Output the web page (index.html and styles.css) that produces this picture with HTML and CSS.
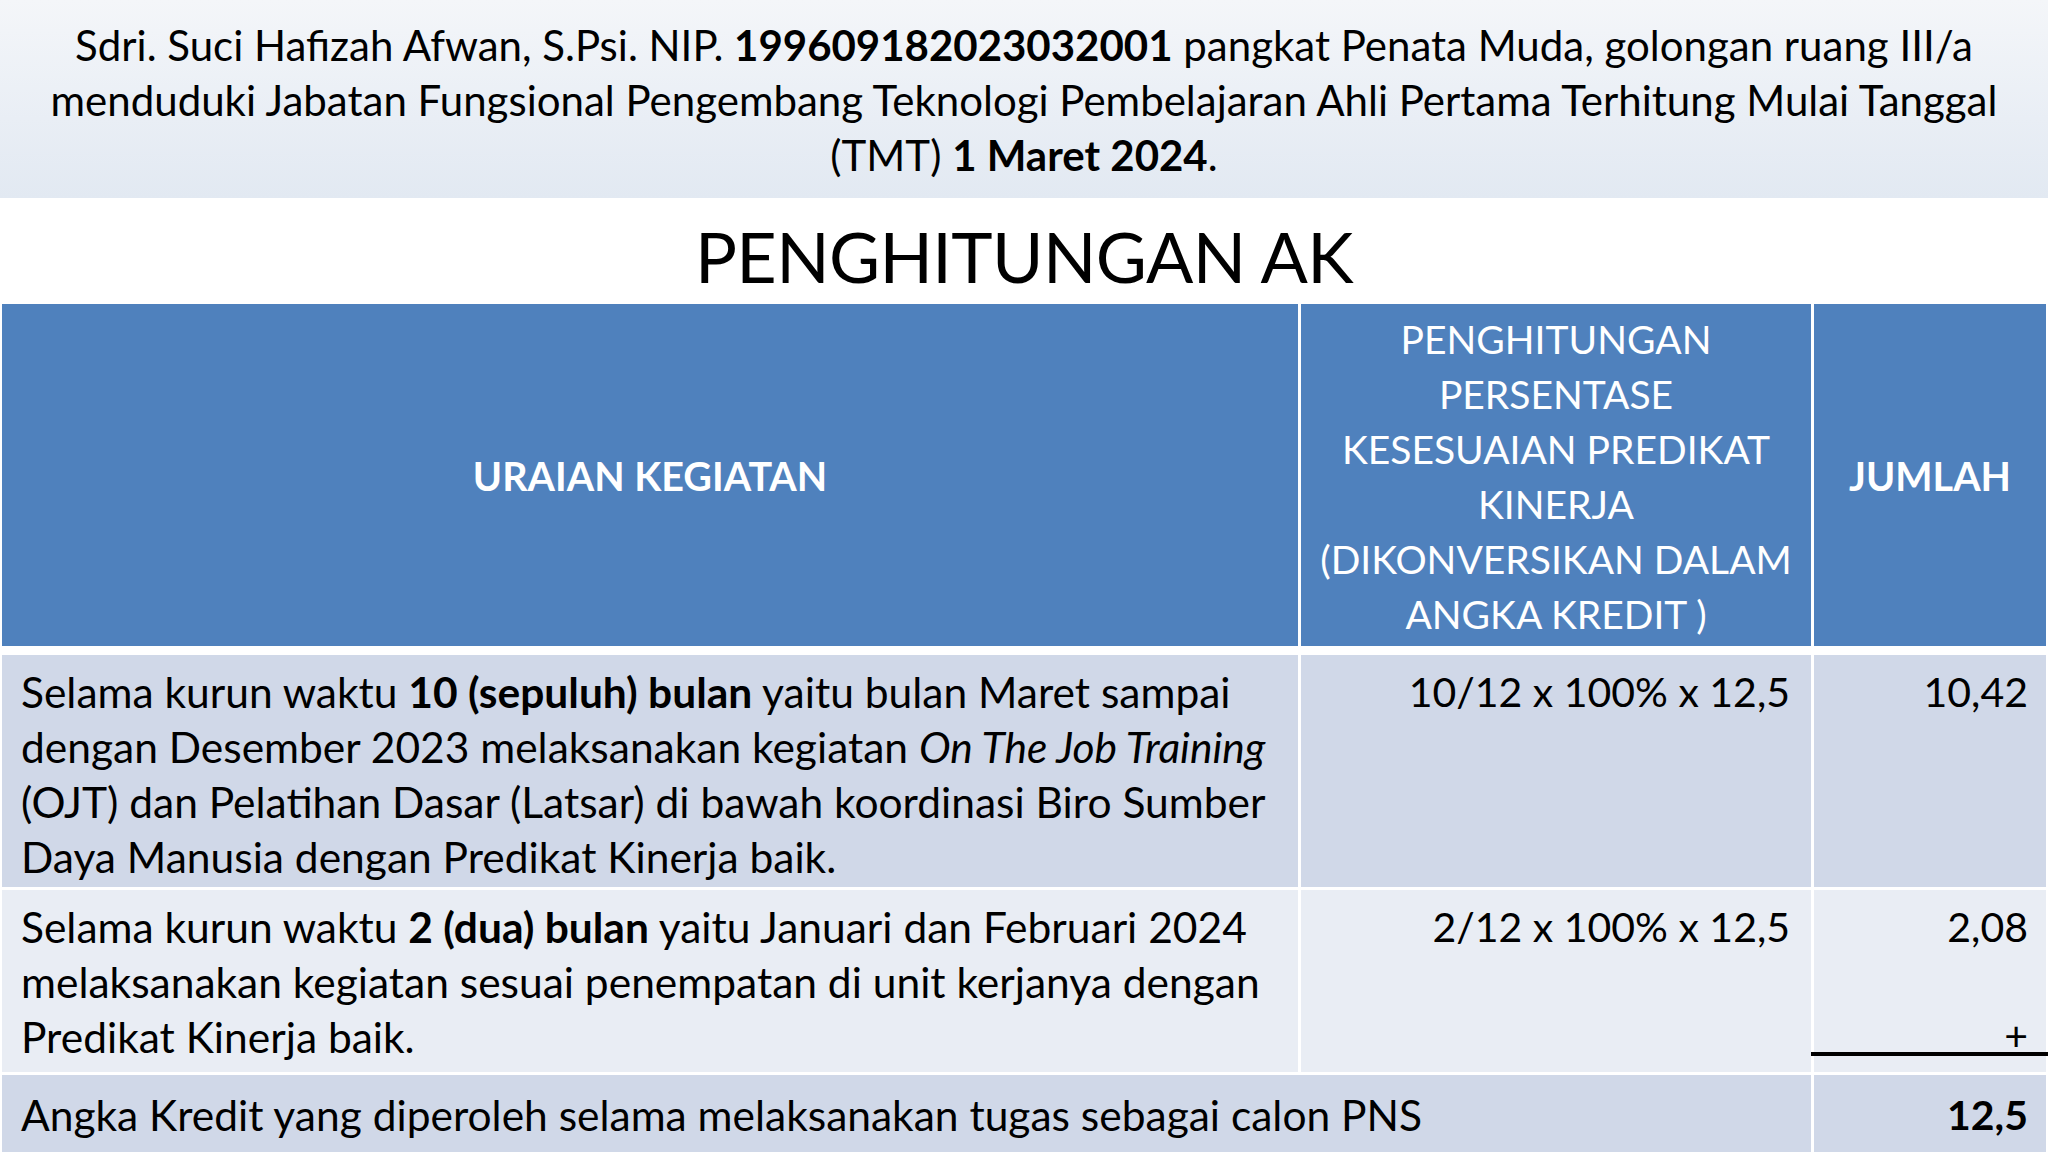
FILE: index.html
```html
<!DOCTYPE html>
<html lang="id">
<head>
<meta charset="utf-8">
<title>Penghitungan AK</title>
<link rel="stylesheet" href="styles.css">
</head>
<body>
<div class="intro">
  <p>Sdri. Suci Hafizah Afwan, S.Psi. NIP. <b>199609182023032001</b> pangkat Penata Muda, golongan ruang III/a<br>menduduki Jabatan Fungsional Pengembang Teknologi Pembelajaran Ahli Pertama Terhitung Mulai Tanggal<br>(TMT) <b>1 Maret 2024</b>.</p>
</div>
<h1 class="title">PENGHITUNGAN AK</h1>
<div class="grid">
  <div class="hd bold">URAIAN KEGIATAN</div>
  <div class="hd thin">PENGHITUNGAN<br>PERSENTASE<br>KESESUAIAN PREDIKAT<br>KINERJA<br>(DIKONVERSIKAN DALAM<br>ANGKA KREDIT )</div>
  <div class="hd bold">JUMLAH</div>

  <div class="cell band1 desc">Selama kurun waktu <b>10 (sepuluh) bulan</b> yaitu bulan Maret sampai<br>dengan Desember 2023 melaksanakan kegiatan <i>On The Job Training</i><br>(OJT) dan Pelatihan Dasar (Latsar) di bawah koordinasi Biro Sumber<br>Daya Manusia dengan Predikat Kinerja baik.</div>
  <div class="cell band1 calc">10/12 x 100% x 12,5</div>
  <div class="cell band1 total">10,42</div>

  <div class="cell band2 desc">Selama kurun waktu <b>2 (dua) bulan</b> yaitu Januari dan Februari 2024<br>melaksanakan kegiatan sesuai penempatan di unit kerjanya dengan<br>Predikat Kinerja baik.</div>
  <div class="cell band2 calc">2/12 x 100% x 12,5</div>
  <div class="cell band2 total sum">
    <div class="val">2,08</div>
    <div class="plus">+</div>
    <div class="rule"></div>
  </div>

  <div class="cell band1 desc wide last">Angka Kredit yang diperoleh selama melaksanakan tugas sebagai calon PNS</div>
  <div class="cell band1 total last"><b>12,5</b></div>
</div>
</body>
</html>
```

FILE: styles.css
```css
html, body {
  margin: 0;
  padding: 0;
}
body {
  width: 2048px;
  height: 1152px;
  overflow: hidden;
  background: #ffffff;
  color: #000000;
  font-family: Lato, "Open Sans", "DejaVu Sans", sans-serif;
}

.intro {
  height: 198px;
  box-sizing: border-box;
  padding-top: 18px;
  background: linear-gradient(180deg, #f4f6f9 0%, #e9eef5 60%, #e2e9f2 100%);
  text-align: center;
  font-size: 42px;
  line-height: 55px;
}
.intro p {
  margin: 0;
}

.title {
  margin: 0;
  height: 106px;
  box-sizing: border-box;
  padding-top: 11px;
  font-size: 70px;
  line-height: 95px;
  letter-spacing: -0.6px;
  font-weight: 400;
  text-align: center;
}

.grid {
  margin-left: 2px;
  display: grid;
  grid-template-columns: 1296px 510px 232px;
  grid-template-rows: 348px 232px 182px 80px;
  column-gap: 3px;
  row-gap: 3px;
  font-size: 42.5px;
  line-height: 55px;
}

.hd {
  margin-bottom: 6px;
  background: #4f81bd;
  color: #ffffff;
  display: flex;
  align-items: center;
  justify-content: center;
  text-align: center;
  font-size: 39.5px;
}
.hd.bold {
  font-weight: 700;
}
.hd.thin {
  font-size: 39px;
  padding-top: 4px;
  box-sizing: border-box;
}

.cell {
  box-sizing: border-box;
  padding-top: 9px;
}
.band1 {
  background: #d0d8e8;
}
.band2 {
  background: #e9edf4;
}
.desc {
  padding-left: 19px;
  padding-right: 8px;
}
.calc {
  text-align: right;
  padding-right: 21px;
  font-size: 41px;
}
.total {
  text-align: right;
  padding-right: 18px;
  font-size: 41px;
}
.wide {
  grid-column: span 2;
}
.last {
  padding-top: 12px;
}

.sum {
  display: flex;
  flex-direction: column;
}
.sum .plus {
  margin-top: auto;
  line-height: 30px;
  margin-bottom: 1px;
}
.sum .rule {
  height: 4px;
  background: #000000;
  margin-left: -3px;
  margin-right: -20px;
  margin-bottom: 16px;
}
```
